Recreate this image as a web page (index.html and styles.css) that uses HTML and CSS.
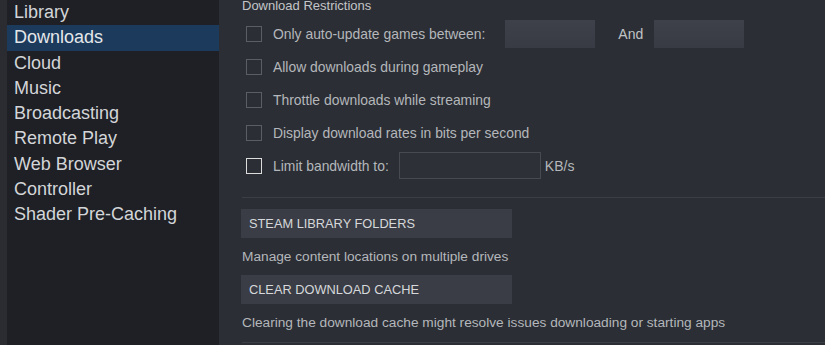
FILE: index.html
```html
<!DOCTYPE html>
<html lang="en">
<head>
  <meta charset="UTF-8" />
  <title>Settings - Downloads</title>
  <link rel="stylesheet" href="styles.css">
</head>
<body>

<div class="window">
  <div class="edge"></div>

  <ul class="nav">
    <li>Library</li>
    <li class="active">Downloads</li>
    <li>Cloud</li>
    <li>Music</li>
    <li>Broadcasting</li>
    <li>Remote Play</li>
    <li>Web Browser</li>
    <li>Controller</li>
    <li>Shader Pre-Caching</li>
  </ul>

  <div class="panel">
    <div class="section-title">Download Restrictions</div>

    <div class="options">
      <div class="option">
        <span class="check"></span>
        <span class="label">Only auto-update games between:</span>
        <span class="time-box first"></span>
        <span class="and">And</span>
        <span class="time-box"></span>
      </div>
      <div class="option">
        <span class="check"></span>
        <span class="label">Allow downloads during gameplay</span>
      </div>
      <div class="option">
        <span class="check"></span>
        <span class="label">Throttle downloads while streaming</span>
      </div>
      <div class="option">
        <span class="check"></span>
        <span class="label">Display download rates in bits per second</span>
      </div>
      <div class="option">
        <span class="check bright"></span>
        <span class="label">Limit bandwidth to:</span>
        <span class="rate-box"></span>
        <span class="unit">KB/s</span>
      </div>
    </div>

    <hr class="divider">

    <div class="action">
      <button class="btn">STEAM LIBRARY FOLDERS</button>
      <p class="hint">Manage content locations on multiple drives</p>
    </div>
    <div class="action">
      <button class="btn">CLEAR DOWNLOAD CACHE</button>
      <p class="hint">Clearing the download cache might resolve issues downloading or starting apps</p>
    </div>

    <hr class="divider last">
  </div>
</div>

</body>
</html>
```

FILE: styles.css
```css
body {
  margin: 0;
  background: #2b2e34;
  font-family: Arial, "Liberation Sans", sans-serif;
  overflow: hidden;
}

.window {
  display: flex;
  height: 345px;
}

.edge {
  width: 7px;
  background: #2a2c31;
}

/* Left navigation */
.nav {
  list-style: none;
  margin: 0;
  padding: 0;
  width: 212px;
  background: #1e2025;
}
.nav li {
  height: 25.3px;
  line-height: 25.3px;
  padding-left: 7px;
  font-size: 18px;
  color: #d3d5d8;
}
.nav li.active {
  background: #1b3a5c;
  color: #e4e7ea;
}

/* Right panel */
.panel {
  flex: 1;
  background: #2b2e34;
  padding-left: 23px;
}

.section-title {
  font-size: 13px;
  color: #c3c5c8;
  margin-top: -3px;
  height: 18px;
  line-height: 17px;
}

.options {
  padding-top: 2px;
}
.option {
  display: flex;
  align-items: center;
  height: 33px;
  padding-left: 4px;
}

.check {
  width: 14px;
  height: 14px;
  border: 1px solid #5a5d63;
  flex-shrink: 0;
}
.check.bright {
  border-color: #dcdcdc;
}

.label {
  margin-left: 11px;
  font-size: 13.9px;
  color: #b4b7bb;
}

.time-box {
  width: 90px;
  height: 28px;
  background: linear-gradient(#3e414a, #383b43);
}
.time-box.first {
  margin-left: 20px;
}
.and {
  font-size: 14px;
  color: #c0c2c6;
  margin: 0 10px 0 23px;
  width: 26px;
}

.rate-box {
  width: 140px;
  height: 25px;
  margin-left: 10px;
  border: 1px solid #474a51;
  background: #2d3036;
}
.unit {
  font-size: 14px;
  color: #b4b7bb;
  margin-left: 4px;
}

.divider {
  border: none;
  border-top: 1px solid #3b3e45;
  margin: 15px 0 0 0;
}

.action {
  padding-top: 11px;
}
.btn {
  display: block;
  width: 271px;
  height: 29px;
  padding: 0 0 0 8px;
  margin-left: -1px;
  border: none;
  background: #3a3d45;
  color: #d6d8db;
  font-family: Arial, "Liberation Sans", sans-serif;
  font-size: 12.8px;
  text-align: left;
}
.hint {
  margin: 0;
  height: 37px;
  line-height: 37px;
  font-size: 13.7px;
  color: #b4b7bb;
}
.action + .action {
  padding-top: 0;
}
.divider.last {
  margin-top: 1px;
}
```
